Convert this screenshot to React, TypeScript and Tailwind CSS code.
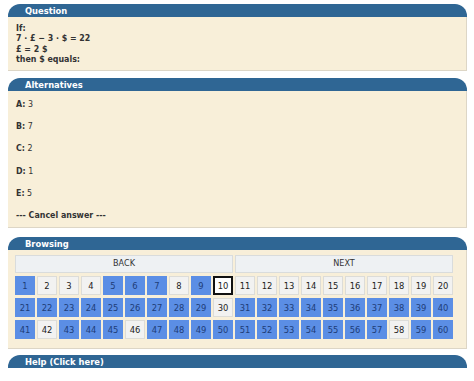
import React from "react";

const font = { fontFamily: '"DejaVu Sans Condensed", "DejaVu Sans", Verdana, sans-serif' };

function Header({ title }: { title: string }) {
  return (
    <div className="h-[13px] bg-[#2f6694] rounded-t-[12px] flex items-center pl-[17px]">
      <span className="text-white font-bold text-[9.3px] leading-[13px]">{title}</span>
    </div>
  );
}

const blue = new Set<number>([
  1, 5, 6, 7, 9,
  21, 22, 23, 24, 25, 26, 27, 28, 29, 31, 32, 33, 34, 35, 36, 37, 38, 39, 40,
  41, 43, 44, 45, 47, 48, 49, 50, 51, 52, 53, 54, 55, 56, 57, 59, 60,
]);

export default function App() {
  const nums = Array.from({ length: 60 }, (_, i) => i + 1);
  return (
    <div className="w-[474px] h-[381px] bg-white pt-[4px] text-[#333]" style={font}>
      <div className="ml-[8px] w-[459px]">
        <Header title="Question" />
        <div className="h-[54px] bg-[#f8efd9] border-r border-b border-[#ddd6c6] pl-[8px] pt-[6px] text-[8.8px] leading-[10.4px] font-bold">
          <div>If:</div>
          <div>7 · £ − 3 · $ = 22</div>
          <div>£ = 2 $</div>
          <div>then $ equals:</div>
        </div>
      </div>

      <div className="ml-[8px] w-[459px] mt-[7px]">
        <Header title="Alternatives" />
        <div className="h-[137px] bg-[#f8efd9] border-r border-b border-[#ddd6c6] pl-[8px] pt-[8px] text-[8.8px]">
          {[
            ["A:", "3"],
            ["B:", "7"],
            ["C:", "2"],
            ["D:", "1"],
            ["E:", "5"],
          ].map(([a, b]) => (
            <div key={a} className="h-[22.2px] leading-[10px]">
              <span className="font-bold">{a}</span> {b}
            </div>
          ))}
          <div className="leading-[10px] font-bold">--- Cancel answer ---</div>
        </div>
      </div>

      <div className="ml-[8px] w-[459px] mt-[9px]">
        <Header title="Browsing" />
        <div className="h-[99px] bg-[#f8efd9] border-r border-b border-[#ddd6c6] pl-[7px] pt-[5px]">
          <div className="w-[438px] flex gap-[2px]">
            <div className="w-[218px] h-[18px] bg-[#eef1f3] border border-[#d9dcdc] flex items-center justify-center text-[9px] text-[#333]">
              BACK
            </div>
            <div className="w-[218px] h-[18px] bg-[#eef1f3] border border-[#d9dcdc] flex items-center justify-center text-[9px] text-[#333]">
              NEXT
            </div>
          </div>
          <div className="w-[440px] mt-[3px] grid grid-cols-[repeat(20,20px)] gap-x-[2px] gap-y-[3px]">
            {nums.map((n) => {
              const sel = n === 10;
              const isBlue = blue.has(n);
              const cls = sel
                ? "bg-white border-2 border-[#111] text-[#222]"
                : isBlue
                ? "bg-[#5b8ee5] border border-[#5b8ee5] text-[#1e3d78]"
                : "bg-[#f2f2f1] border border-[#dcdcd8] text-[#222]";
              return (
                <div
                  key={n}
                  className={`h-[19px] flex items-center justify-center text-[9.3px] ${cls}`}
                >
                  {n}
                </div>
              );
            })}
          </div>
        </div>
      </div>

      <div className="ml-[8px] w-[459px] mt-[6px]">
        <Header title="Help (Click here)" />
      </div>
    </div>
  );
}
